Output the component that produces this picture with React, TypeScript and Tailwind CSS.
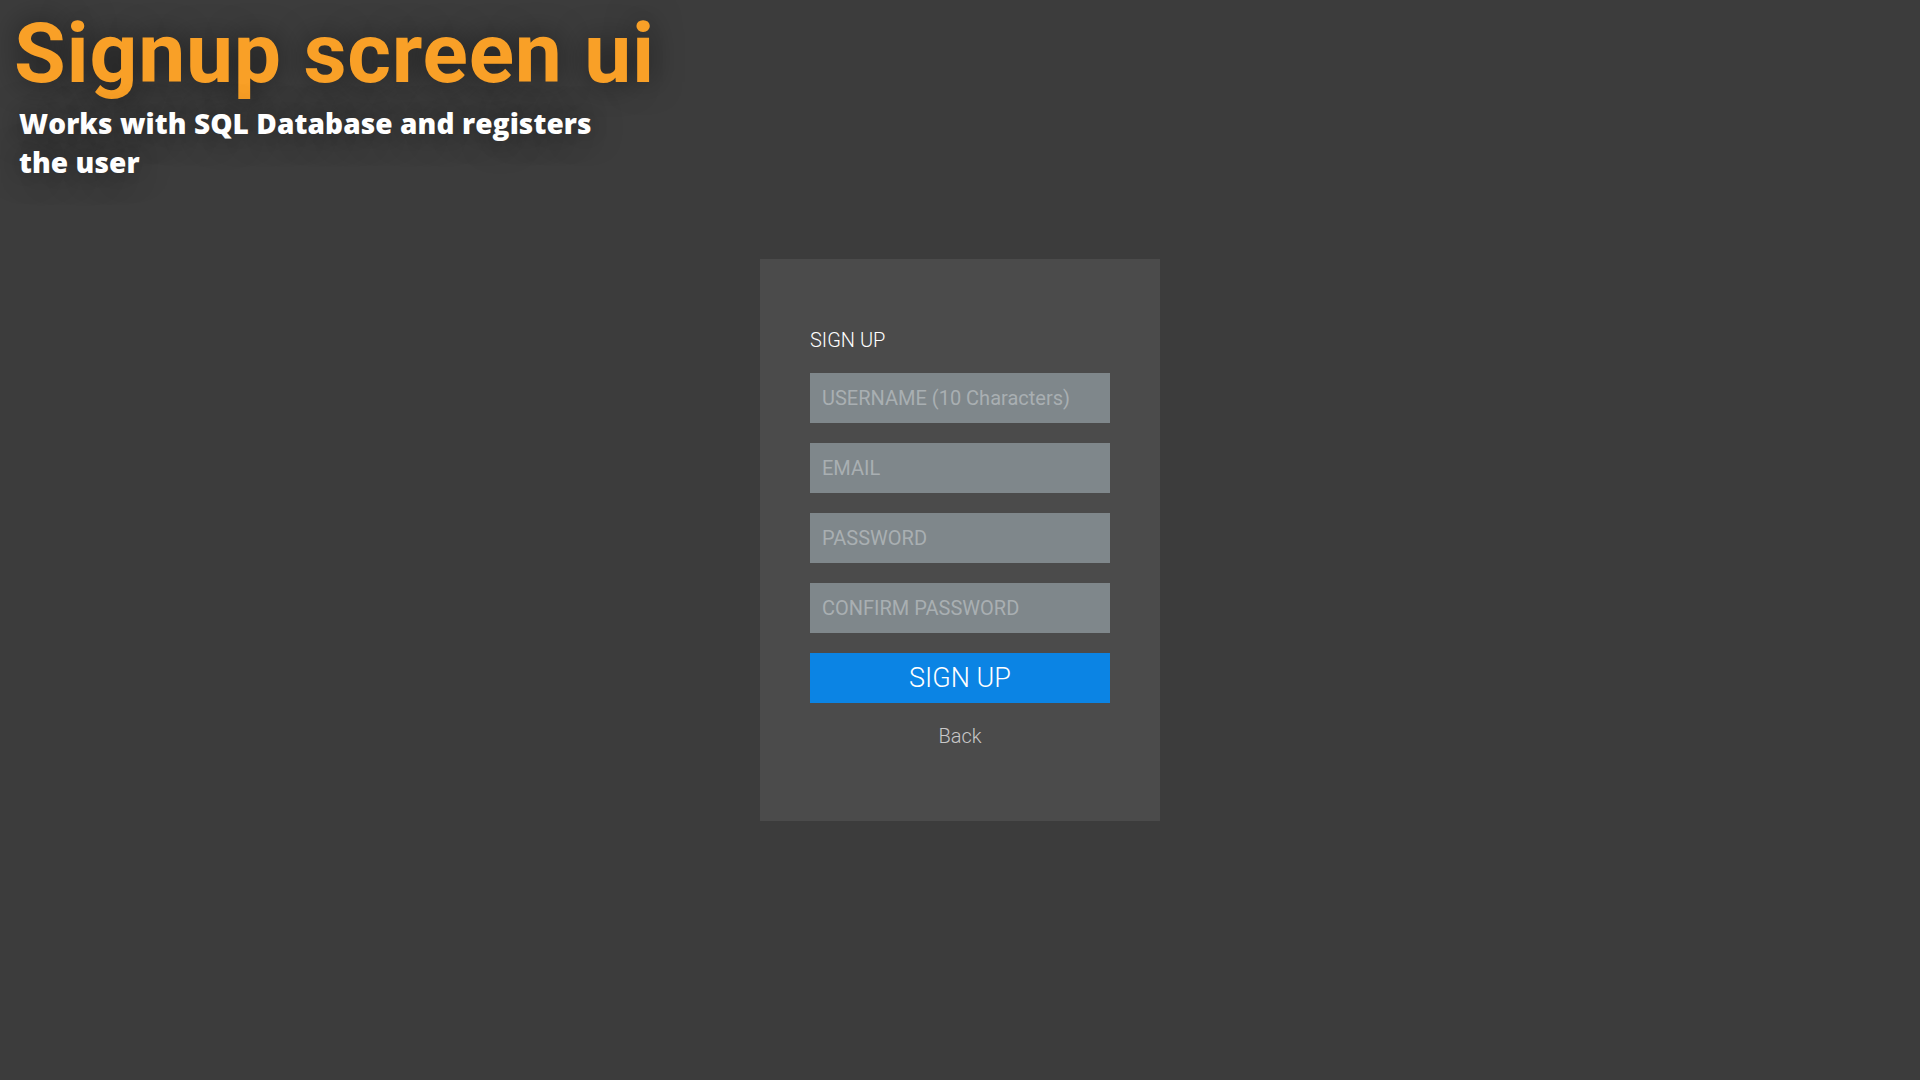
import React from "react";

const fields = [
  { name: "username", placeholder: "USERNAME (10 Characters)", type: "text" },
  { name: "email", placeholder: "EMAIL", type: "email" },
  { name: "password", placeholder: "PASSWORD", type: "password" },
  { name: "confirm", placeholder: "CONFIRM PASSWORD", type: "password" },
];

export default function App() {
  return (
    <div className="min-h-screen bg-[#3c3c3c] font-['Roboto',sans-serif]">
      {/* Header caption */}
      <header className="pt-3 pl-[14px] [text-shadow:0_0_30px_rgba(0,0,0,0.55)]">
        <h1 className="text-[84px] leading-none font-bold text-[#f9a027] tracking-[0.75px]">
          Signup screen ui
        </h1>
        <p className="mt-[8px] ml-[5px] w-[590px] text-[28px] leading-[39px] font-extrabold text-white font-['Open_Sans',sans-serif] tracking-[0.1px]">
          Works with SQL Database and registers the user
        </p>
      </header>

      {/* Form panel */}
      <main className="mt-[77px] flex justify-center">
        <form
          className="w-[400px] bg-[#4b4b4b] pt-[69px] pb-[73px] px-[50px] flex flex-col"
          onSubmit={(e) => e.preventDefault()}
        >
          <h2 className="text-[20px] leading-[24px] font-light text-white">SIGN UP</h2>

          <div className="mt-[21px] flex flex-col gap-5">
            {fields.map((f) => (
              <input
                key={f.name}
                name={f.name}
                type={f.type}
                placeholder={f.placeholder}
                className="h-[50px] w-full bg-[#7f878b] px-3 text-[20px] text-white placeholder:text-[#a9afb2] outline-none"
              />
            ))}
            <button
              type="submit"
              className="h-[50px] w-full bg-[#0b84e4] text-[27px] font-light text-white"
            >
              SIGN UP
            </button>
          </div>

          <a href="#" className="mt-[21px] text-center text-[20px] leading-[24px] font-light text-[#c8c8c8]">
            Back
          </a>
        </form>
      </main>
    </div>
  );
}
